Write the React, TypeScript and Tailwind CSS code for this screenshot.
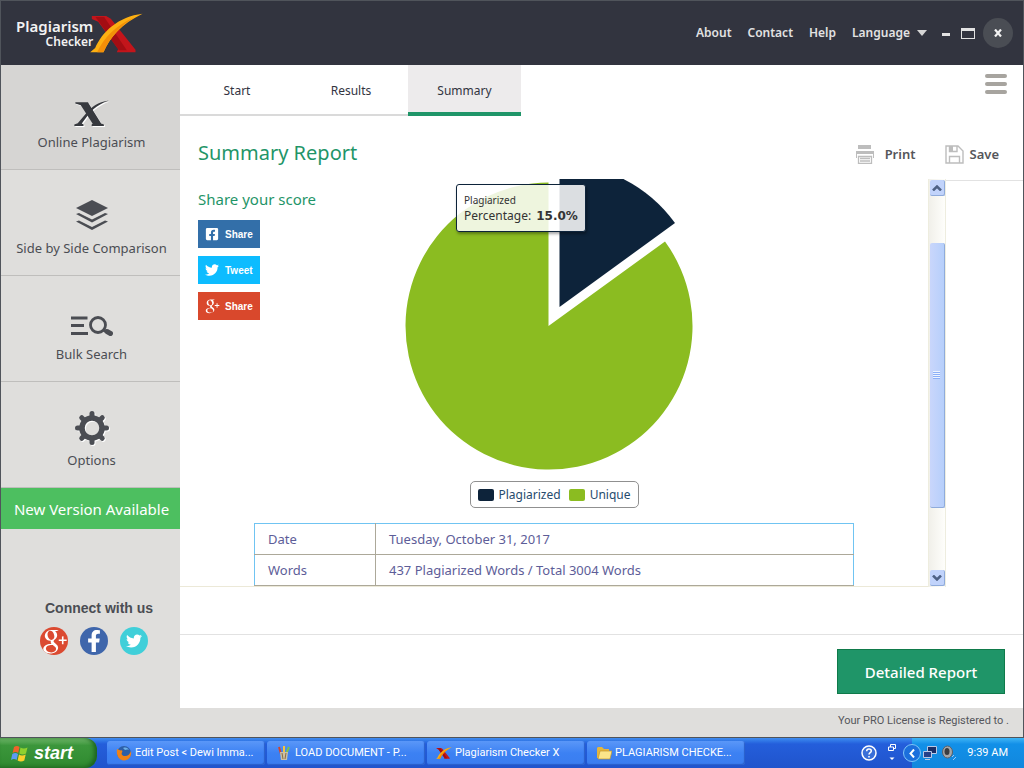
import React from 'react';
import { FaFacebookF, FaFacebookSquare, FaTwitter } from 'react-icons/fa';
import { TiSocialGooglePlus } from 'react-icons/ti';

const TABS = ['Start', 'Results', 'Summary'];

const ROWS = [
  { label: 'Date', value: 'Tuesday, October 31, 2017' },
  { label: 'Words', value: '437 Plagiarized Words / Total 3004 Words' },
];

const LogoMark = ({ className }: { className?: string }) => (
  <svg viewBox="270 38 158 120" className={className} aria-hidden="true">
    <path d="M275 47h43l14 8 74 93v8h-56l4-10-60-82-19-8z" fill="#c3151b" />
    <path d="M286 50h26l68 100h-24z" fill="#a30d13" />
    <path d="M427 40c-72 8-122 55-142 103l-15 13h40c20-46 55-86 117-116z" fill="#fdb012" />
    <path d="M404 50c-60 28-92 60-113 106h19c18-42 45-76 94-106z" fill="#f38f08" />
  </svg>
);

const XIcon = () => (
  <svg viewBox="222 304 106 80" className="h-7 w-9 drop-shadow-[1px_1px_0_white]" fill="#37393e" aria-hidden="true">
    <path d="M226 312h37l39 63 8 3v4h-36v-4l3-2-35-55-16-5z" />
    <path d="M325 307c-34 5-50 18-67 38l-25 29-10 4v4h27v-4l-5-3c24-35 40-54 80-68z" />
  </svg>
);

const LayersIcon = () => (
  <svg viewBox="0 0 32 30" className="mb-[3px] h-[30px] w-8" fill="#4b4d53" aria-hidden="true">
    <path d="M16 0 32 8 16 16 0 8z" />
    <path d="M0 14l3-1L16 19.500l13-6.500L32 14 16 22.500z" />
    <path d="M0 21.500l3-1L16 27l13-6.500L32 21.500 16 30z" />
  </svg>
);

const BulkIcon = () => (
  <svg viewBox="0 0 42 20" className="mb-[3px] h-5 w-[42px]" fill="none" stroke="#4b4d53" aria-hidden="true">
    <path d="M0 2h16.500M0 9.500h13M0 17.500h17" strokeWidth="2.800" />
    <circle cx="27" cy="9" r="7.500" strokeWidth="2.800" />
    <path d="M32 13.500l3 2" strokeWidth="3" />
    <path d="M36 15.500l3.500 2" strokeWidth="5" strokeLinecap="round" />
  </svg>
);

const GearIcon = () => (
  <svg viewBox="-17 -17 34 34" className="size-[34px] drop-shadow-[1px_1px_0_white]" fill="none" stroke="#4b4d53" aria-hidden="true">
    <circle r="10" strokeWidth="5.500" />
    {[0, 45, 90, 135, 180, 225, 270, 315].map((a) => (
      <path key={a} d="M0-11V-14.500" strokeWidth="5" strokeLinecap="round" transform={`rotate(${a})`} />
    ))}
  </svg>
);

const NAV = [
  { label: 'Online Plagiarism', Icon: XIcon, active: true },
  { label: 'Side by Side Comparison', Icon: LayersIcon, active: false },
  { label: 'Bulk Search', Icon: BulkIcon, active: false },
  { label: 'Options', Icon: GearIcon, active: false },
];

const Header = () => (
  <header className="flex h-[65px] items-center justify-between border-t border-[#50545b] bg-[#32343f] pl-[15px] pr-[10px]">
    <div className="flex items-center">
      <div className="flex flex-col items-end font-semibold text-[#f2f2f2]">
        <span className="text-[15px] leading-[17px]">Plagiarism</span>
        <span className="text-[12px] leading-[13px]">Checker</span>
      </div>
      <LogoMark className="-ml-[3px] h-10 w-[53px]" />
    </div>

    <nav className="flex items-center text-[12px] font-semibold text-[#e2e2e2]">
      <div className="flex gap-4">
        <a href="#about">About</a>
        <a href="#contact">Contact</a>
        <a href="#help">Help</a>
        <button type="button" className="flex items-center gap-[7px]">
          Language
          <svg viewBox="0 0 10 6" className="h-1.5 w-2.5" fill="#d6d6d6" aria-hidden="true">
            <path d="M0 0h10L5 6z" />
          </svg>
        </button>
      </div>
      <button type="button" aria-label="Minimize" className="ml-[14px] p-px">
        <span className="mt-0.5 block h-[3px] w-2 bg-[#e2e2e2]" />
      </button>
      <button type="button" aria-label="Maximize" className="ml-[10px]">
        <span className="block h-[11px] w-[14px] border border-t-[3px] border-[#e2e2e2]" />
      </button>
      <button type="button" aria-label="Close" className="ml-2 flex size-[30px] items-center justify-center rounded-full bg-[#4a4d54]">
        <svg viewBox="0 0 8 8" className="size-2" stroke="#f2f2f2" strokeWidth="2.200" aria-hidden="true">
          <path d="M1 0.500l6 7M7 0.500l-6 7" />
        </svg>
      </button>
    </nav>
  </header>
);

const Sidebar = () => (
  <aside className="w-[179px] shrink-0 bg-[#dfdedc]">
    {NAV.map(({ label, Icon, active }) => (
      <button
        key={label}
        type="button"
        className={`flex h-[106px] w-full flex-col items-center justify-end border-b border-[#bfbebc] pb-[17px] pl-0.5 text-[13px] text-[#4b4d53] first:h-[105px] ${active ? 'bg-[#d6d5d3]' : ''}`}
      >
        <span className="flex h-10 items-end pb-[5px]">
          <Icon />
        </span>
        <span className="whitespace-nowrap leading-[20px]">{label}</span>
      </button>
    ))}
    <button type="button" className="h-[41px] w-full whitespace-nowrap bg-[#4dbf60] pl-0.5 pt-0.5 text-[15px] text-white">
      New Version Available
    </button>
    <div className="mt-[70px] pl-[39px]">
      <p className="pl-[5px] font-['Liberation_Sans',sans-serif] text-[14px] font-bold leading-[18px] text-[#4b4d53]">Connect with us</p>
      <div className="mt-[10px] flex gap-3">
        <a href="#google" aria-label="Google Plus" className="flex size-7 items-center justify-center overflow-hidden rounded-full bg-[#db4a31] text-white">
          <TiSocialGooglePlus size={38} className="shrink-0" />
        </a>
        <a href="#facebook" aria-label="Facebook" className="flex size-7 items-end justify-center rounded-full bg-[#3f66ab] pb-[3px] text-white">
          <FaFacebookF size={22} />
        </a>
        <a href="#twitter" aria-label="Twitter" className="flex size-7 items-center justify-center rounded-full bg-[#40cfd9] text-white">
          <FaTwitter size={16} />
        </a>
      </div>
    </div>
  </aside>
);

const ShareButtons = () => (
  <div className="pl-[18px] pt-[9px]">
    <h2 className="whitespace-nowrap text-[15px] leading-[22px] text-[#1f9568]">Share your score</h2>
    <div className="mt-[10px] flex w-[62px] flex-col gap-[8px] font-['Liberation_Sans',sans-serif] text-[10px] font-bold text-white">
      <button type="button" className="flex h-7 items-center gap-1.5 bg-[#336fa9] pl-[7px]">
        <FaFacebookSquare size={14} />
        Share
      </button>
      <button type="button" className="flex h-7 items-center gap-1.5 bg-[#0dbcff] pl-[7px]">
        <FaTwitter size={14} />
        Tweet
      </button>
      <button type="button" className="flex h-7 items-center gap-0.5 bg-[#d9482c] pl-[3px]">
        <TiSocialGooglePlus size={22} />
        Share
      </button>
    </div>
  </div>
);

const PieChart = () => (
  <div className="relative flex flex-col items-center">
    <svg viewBox="0 0 300 292" className="h-[292px] w-[300px]" role="img" aria-label="Plagiarized 15%, Unique 85%">
      <path d="M144.500 147V3.500A143.500 143.500 0 1 0 261 62.500z" fill="#8bbc21" />
      <path d="M155.500 128V-15.500A143.500 143.500 0 0 1 271 44z" fill="#0d233a" />
    </svg>
    <div className="absolute left-[52px] top-[5px] whitespace-nowrap rounded-[3px] border border-[#0d233a] bg-white/85 px-[7px] py-[7px] text-[#333] shadow-[1px_2px_3px_rgba(0,0,0,0.35)]">
      <p className="text-[10px] leading-[16px]">Plagiarized</p>
      <p className="text-[12px] leading-[16px]">
        Percentage: <b className="ml-0.5 font-['DejaVu_Sans',sans-serif]">15.0%</b>
      </p>
    </div>
    <div className="mt-[10px] flex h-[27px] items-center rounded-[5px] border border-[#909090] px-[7px] text-[12px] text-[#274b6d]">
      <span className="mr-[5px] h-3 w-4 rounded-[2px] bg-[#0d233a]" />
      Plagiarized
      <span className="ml-2 mr-[5px] h-3 w-4 rounded-[2px] bg-[#8bbc21]" />
      Unique
    </div>
  </div>
);

const ScrollArrow = ({ down }: { down?: boolean }) => (
  <button
    type="button"
    aria-label={down ? 'Scroll down' : 'Scroll up'}
    className="flex h-4 w-[15px] shrink-0 items-center justify-center rounded-[2px] border-b border-r border-[#8fabdb] bg-[#c1d3fb]"
  >
    <svg viewBox="0 0 10 6" className="h-1.5 w-2.5" fill="none" stroke="#4d6185" strokeWidth="2.500" aria-hidden="true">
      <path d={down ? 'M1 0.500l4 4 4-4' : 'M1 5.500l4-4 4 4'} />
    </svg>
  </button>
);

const ScrollBar = () => (
  <div className="flex w-[18px] shrink-0 flex-col items-center border-x border-[#eeeddf] bg-gradient-to-r from-[#f1f0ea] to-[#fefefb] pb-px pt-px">
    <ScrollArrow />
    <div className="mt-[47px] flex h-[265px] w-[15px] flex-col items-center justify-center gap-px rounded-[2px] border-b border-r border-[#8fabdb] bg-gradient-to-r from-[#c9d6fb] to-[#b6cffb]">
      {[0, 1, 2, 3].map((i) => (
        <span key={i} className="h-px w-[7px] bg-[#8cb0f8] shadow-[0_-1px_0_#eef4fe]" />
      ))}
    </div>
    <div className="flex-1" />
    <ScrollArrow down />
  </div>
);

const Report = () => (
  <div className="flex h-[408px]">
    <div className="flex min-w-0 flex-1">
      <div className="min-w-0 flex-1 overflow-hidden border-b border-[#ece9d8]">
        <div className="grid grid-cols-[1fr_300px_1fr]">
          <ShareButtons />
          <PieChart />
        </div>
        <table className="mx-auto mt-[15px] w-[600px] border-collapse border border-[#70c4f2] text-[13px] text-[#5d5d98]">
          <tbody>
            {ROWS.map((row) => (
              <tr key={row.label} className="h-[31px] border-b border-[#aca899]">
                <th scope="row" className="w-[121px] border-r border-[#aca899] pl-[13px] pt-0.5 text-left font-normal">
                  {row.label}
                </th>
                <td className="pl-[13px] pt-0.5">{row.value}</td>
              </tr>
            ))}
          </tbody>
        </table>
      </div>
      <ScrollBar />
    </div>
    <div className="mt-px w-[77px] border-t border-[#e2e2e2]" />
  </div>
);

const Toolbar = () => (
  <div className="flex h-[63px] items-center justify-between pl-[18px] pr-[24px] pt-[12px]">
    <h1 className="pb-0.5 text-[20px] leading-[28px] text-[#1f9568]">Summary Report</h1>
    <div className="flex items-center gap-[29px] pt-0.5 text-[13px] font-semibold text-[#55565b]">
      <button type="button" className="flex items-center gap-[11px]">
        <svg viewBox="0 0 18 19" className="h-[19px] w-[18px]" fill="#bdbdbd" aria-hidden="true">
          <path d="M2 0h13v4H2zM0 6h18v7h-1V9H1v4H0z" />
          <path d="M2.500 11.500h13v7h-13zM4 13.500h10M4 16h10" fill="none" stroke="#bdbdbd" strokeWidth="1.300" />
        </svg>
        Print
      </button>
      <button type="button" className="flex items-center gap-[6px]">
        <svg viewBox="0 0 19 19" className="size-[19px]" fill="none" stroke="#bdbdbd" strokeWidth="1.400" aria-hidden="true">
          <path d="M1 1h12l5 5v12H1zM4.500 18v-6.500h10V18M4.500 1v5.500h7.500V1" />
          <path d="M5 1h3v5H5z" fill="#bdbdbd" stroke="none" />
        </svg>
        Save
      </button>
    </div>
  </div>
);

const TASK = 'flex h-[24px] w-[158px] items-center gap-[3px] rounded-[3px] bg-gradient-to-b from-[#5a97f8] via-[#3c81f3] to-[#3a7df0] pl-[9px] whitespace-nowrap shadow-[inset_-1px_-1px_1px_#2a5fc9]';

const TaskBar = () => (
  <footer className="flex h-[30px] items-stretch bg-gradient-to-b from-[#3f8cf0] via-[#245edb] via-20% to-[#2054cc] font-['Roboto',sans-serif] text-[11px] text-white">
    <button
      type="button"
      className="flex w-[97px] items-center gap-[5px] rounded-r-[12px] bg-gradient-to-b from-[#6fb76a] via-[#3b963b] via-25% to-[#2f8a30] pl-[11px] font-['Liberation_Sans',sans-serif] text-[18px] font-bold italic shadow-[inset_-3px_-1px_4px_#1d641f]"
    >
      <svg viewBox="0 0 18 17" className="h-[17px] w-[18px]" aria-hidden="true">
        <path d="M3 2c2-1.500 4-1.200 5.500 0L7.200 8C5.500 6.800 3.500 6.800 1.600 8z" fill="#f1622b" />
        <path d="M9.500 2.500c2 1.300 4.500 1.200 7 0L15 8.500c-2 1.300-4.500 1.200-6.700 0z" fill="#8fd02f" />
        <path d="M1.300 9c2-1.200 4-1.200 5.700 0l-1.400 6c-1.600-1.200-3.800-1.200-5.600 0z" fill="#5c9bf5" />
        <path d="M8 9.500c2 1.300 4.300 1.200 6.700 0l-1.400 6c-2.200 1.200-4.500 1.200-6.700 0z" fill="#fbcf2c" />
      </svg>
      start
    </button>

    <div className="ml-[10px] flex flex-1 items-center gap-[2px]">
      <button type="button" className={TASK}>
        <svg viewBox="0 0 16 16" className="size-4" aria-hidden="true">
          <circle cx="8" cy="8" r="7" fill="#2d5fa8" />
          <path d="M1 4c-1 7 2 11 7 11.500 4.500 0 8-4 7-9.500-1 3-3 5-6 5-3 0-4-2-3-3.500C7 6 6 5 4.500 5.500z" fill="#ef8219" />
          <path d="M7 3c3-1 5 0 6 2-2-1-3 0-4 0z" fill="#6db0e8" />
        </svg>
        Edit Post &lt; Dewi Imma...
      </button>
      <button type="button" className={TASK}>
        <svg viewBox="0 0 16 16" className="size-4" fill="none" aria-hidden="true">
          <path d="M5 9 3 2" stroke="#d2452c" strokeWidth="2" />
          <path d="M8 9V1" stroke="#f4c53c" strokeWidth="2" />
          <path d="M10 9l3-7" stroke="#7fc14c" strokeWidth="2" />
          <path d="M4 7h8l-1 8H5z" fill="#c9c0a5" />
          <path d="M6 8l1 6M10 8l-1 6" stroke="#8a6b42" />
        </svg>
        LOAD DOCUMENT - P...
      </button>
      <button type="button" className={TASK}>
        <LogoMark className="h-3 w-4" />
        Plagiarism Checker X
      </button>
      <button type="button" className={TASK}>
        <svg viewBox="0 0 16 16" className="size-4" aria-hidden="true">
          <path d="M1 3l1-1h4l2 2h5v9H1z" fill="#e3b53d" />
          <path d="M4 6h12l-2 8H2z" fill="#fbe58a" stroke="#c3962b" strokeWidth="0.700" />
        </svg>
        PLAGIARISM CHECKE...
      </button>
    </div>

    <div className="flex items-center gap-[11px] pr-[16px]">
      <svg viewBox="0 0 16 16" className="size-4" role="img" aria-label="Help">
        <circle cx="8" cy="8" r="7" fill="#3a6fd8" stroke="white" strokeWidth="1.500" />
        <path d="M5.700 6.200c0-3 4.600-2.800 4.600-.2 0 1.600-2.300 1.700-2.300 3.500M8 11v1.600" fill="none" stroke="white" strokeWidth="1.500" />
      </svg>
      <svg viewBox="0 0 8 18" className="h-[18px] w-2" fill="none" stroke="white" aria-hidden="true">
        <path d="M2.500 3V.500h5v4H6M.500 3h5v3.500h-5z" />
        <path d="M1.500 13.500h5L4 16z" fill="white" stroke="none" />
      </svg>
    </div>

    <div className="flex items-center bg-gradient-to-b from-[#3db5f5] via-[#1290e8] via-20% to-[#1187dd] pr-[16px]">
      <button type="button" aria-label="Show hidden icons" className="-ml-[9px] flex size-[18px] items-center justify-center rounded-full border border-[#7fc5f7] bg-[#1b6fdc]">
        <svg viewBox="0 0 6 9" className="h-[9px] w-1.5" fill="none" stroke="white" strokeWidth="2" aria-hidden="true">
          <path d="M5 .500 1.500 4.500 5 8.500" />
        </svg>
      </button>
      <svg viewBox="0 0 16 16" className="ml-px size-4" stroke="#b9c8e6" aria-hidden="true">
        <path d="M5.500 1.500h9v7h-9z" fill="#1b2e66" />
        <path d="M1.500 6.500h8v6h-8zM3 14.500h5" fill="#26408a" />
      </svg>
      <svg viewBox="0 0 16 16" className="ml-[3px] size-4" fill="none" aria-hidden="true">
        <ellipse cx="6.500" cy="7" rx="5" ry="6" fill="#a5a6a8" stroke="#5c6066" />
        <ellipse cx="6" cy="6.500" rx="2.500" ry="3.500" fill="#3a3c40" />
        <path d="M11 12l2-2M12 15l3-3" stroke="#9cc6f5" />
      </svg>
      <time className="ml-[10px] whitespace-nowrap">9:39 AM</time>
    </div>
  </footer>
);

export default function App() {
  return (
    <div className="flex min-h-screen flex-col bg-white font-['Noto_Sans',sans-serif]">
      <div className="flex flex-1 flex-col border-x border-b border-[#50545b]">
        <Header />
        <div className="flex flex-1">
          <Sidebar />
          <main className="flex min-w-0 flex-1 flex-col">
            <div className="flex items-start justify-between pr-[16px]">
              <div className="flex text-[12px] text-[#32343f]">
                {TABS.map((tab) => (
                  <button
                    key={tab}
                    type="button"
                    className={`h-[51px] ${tab === 'Summary' ? 'w-[113px] border-b-4 border-[#1f9568] bg-[#edebec] pt-1' : 'w-[114px] border-b-2 border-[#dadada] pt-0.5'}`}
                  >
                    {tab}
                  </button>
                ))}
              </div>
              <button type="button" aria-label="Menu" className="mt-[9px] flex w-[22px] flex-col gap-[4px]">
                <span className="h-1 w-full rounded-full bg-[#a7a49f]" />
                <span className="h-1 w-full rounded-full bg-[#a7a49f]" />
                <span className="h-1 w-full rounded-full bg-[#a7a49f]" />
              </button>
            </div>
            <Toolbar />
            <Report />
            <div className="mt-[47px] flex flex-1 items-start justify-end border-t border-[#e2e2e2] pr-[18px] pt-[14px]">
              <button type="button" className="h-[45px] w-[168px] border border-[#0f7a4a] bg-[#1f9568] pt-0.5 text-[15px] font-medium text-white">
                Detailed Report
              </button>
            </div>
            <p className="h-[29px] bg-[#dfdedc] pr-[14px] text-right font-['Roboto',sans-serif] text-[11px] leading-[26px] text-[#55565b]">
              Your PRO License is Registered to .
            </p>
          </main>
        </div>
      </div>
      <TaskBar />
    </div>
  );
}
